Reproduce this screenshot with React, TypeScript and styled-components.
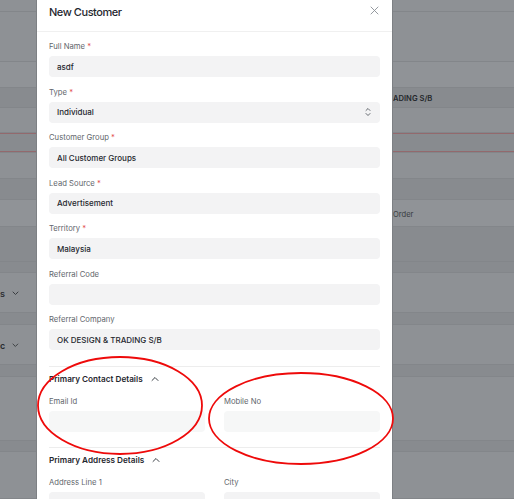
import styled, { createGlobalStyle } from "styled-components";

const SCRIM = "#8e9195";
const SCRIM_LIGHT = "#909397";
const SCRIM_DARK = "#888b8f";
const SCRIM_LINE = "#83868a";
const TEXT = "#1f272e";
const LABEL = "#62666c";
const CONTROL = "#f3f3f4";
const BORDER = "#ededed";

const GlobalStyle = createGlobalStyle`
  html, body {
    margin: 0;
    padding: 0;
    overflow: hidden;
    background: ${SCRIM};
  }
  * {
    box-sizing: border-box;
  }
`;

type Tone = "base" | "light" | "dark";

type Row = {
  height: number;
  tone?: Tone;
  left?: string;
  right?: string;
  rightBold?: boolean;
  accent?: boolean;
};

const rows: Row[] = [
  { height: 12 },
  { height: 50 },
  { height: 26, tone: "light" },
  { height: 20, tone: "dark", right: "ADING S/B", rightBold: true },
  { height: 25 },
  { height: 20, tone: "dark", accent: true },
  { height: 26 },
  { height: 21, tone: "dark" },
  { height: 27, tone: "light", right: "Order" },
  { height: 35, tone: "dark" },
  { height: 11, tone: "dark" },
  { height: 40, left: "s" },
  { height: 12, tone: "dark" },
  { height: 40, left: "c" },
  { height: 12, tone: "dark" },
  { height: 64 },
  { height: 11, tone: "dark" },
  { height: 47 },
];

const toneColor = (t: Tone = "base") =>
  t === "dark" ? SCRIM_DARK : t === "light" ? SCRIM_LIGHT : SCRIM;

const Stage = styled.div`
  position: relative;
  width: 514px;
  height: 499px;
  overflow: hidden;
  font-family: Inter, "Noto Sans", sans-serif;
`;

const Backdrop = styled.div`
  display: flex;
  flex-direction: column;
  width: 100%;
`;

const TopStrip = styled.div`
  display: flex;
  justify-content: flex-end;
  height: 0;
`;

const TopTab = styled.div`
  width: 62px;
  height: 3px;
  background: #97999d;
`;

const BackRow = styled.div<{ $h: number; $tone?: Tone; $accent?: boolean }>`
  display: flex;
  align-items: center;
  height: ${(p) => p.$h}px;
  padding-top: 2px;
  flex-shrink: 0;
  background: ${(p) => toneColor(p.$tone)};
  border-bottom: 1px solid ${SCRIM_LINE};
  box-shadow: ${(p) =>
    p.$accent ? "inset 0 1px 0 #93696d, inset 0 -1px 0 #93696d" : "none"};
`;

const LeftCell = styled.div`
  display: flex;
  align-items: center;
  justify-content: flex-end;
  gap: 7px;
  width: 19px;
  overflow: hidden;
  font-size: 9px;
  font-weight: 600;
  color: #2b2e32;
`;

const Spacer = styled.div`
  width: 374px;
  flex-shrink: 0;
`;

const RightText = styled.span<{ $bold?: boolean }>`
  font-size: 7.6px;
  font-weight: ${(p) => (p.$bold ? 600 : 400)};
  color: ${(p) => (p.$bold ? "#25282c" : "#3a3e43")};
  white-space: nowrap;
`;

const Modal = styled.div`
  position: absolute;
  top: 0;
  left: 36px;
  width: 357px;
  height: 499px;
  overflow: hidden;
  background: #fff;
  border-left: 1px solid #7d8084;
  border-right: 1px solid #7d8084;
  display: flex;
  flex-direction: column;
`;

const Header = styled.div`
  display: flex;
  flex-shrink: 0;
  justify-content: space-between;
  align-items: flex-start;
  height: 32px;
  padding: 4px 13px 0 12px;
  border-bottom: 1px solid #f0f0f0;
`;

const Title = styled.h3`
  margin: 0;
  font-size: 11px;
  line-height: 16px;
  font-weight: 500;
  letter-spacing: -0.45px;
  color: ${TEXT};
`;

const CloseButton = styled.button`
  display: flex;
  border: 0;
  padding: 0;
  margin-top: 2px;
  background: none;
  color: #8a8f95;
`;

const Body = styled.div`
  display: flex;
  flex-shrink: 0;
  flex-direction: column;
  padding: 10px 12px 0;
`;

const Fields = styled.div`
  display: flex;
  flex-direction: column;
  gap: 10.5px;
  padding-bottom: 16px;
`;

const Field = styled.div`
  display: flex;
  flex-direction: column;
  gap: 4px;
  min-width: 0;
`;

const Label = styled.label`
  font-size: 7.7px;
  line-height: 10px;
  color: ${LABEL};
`;

const Required = styled.span`
  color: #e24c4c;
`;

const Control = styled.div<{ $soft?: boolean }>`
  display: flex;
  align-items: center;
  justify-content: space-between;
  height: 21px;
  padding: 0 9px 0 8px;
  border-radius: 4px;
  background: ${(p) => (p.$soft ? "#f6f7f7" : CONTROL)};
  font-size: 8px;
  font-weight: 500;
  color: ${TEXT};
`;

const Section = styled.div`
  display: flex;
  flex-direction: column;
  gap: 12px;
  padding: 6px 0 15px;
  border-top: 1px solid ${BORDER};
`;

const SectionHead = styled.div`
  display: flex;
  align-items: center;
  gap: 8px;
  height: 12px;
  font-size: 8.2px;
  font-weight: 600;
  color: ${TEXT};
`;

const Columns = styled.div`
  display: grid;
  grid-template-columns: 1fr 1fr;
  column-gap: 19px;
`;

const Marks = styled.svg`
  position: absolute;
  inset: 0;
  pointer-events: none;
`;

const ChevronUp = () => (
  <svg width="8" height="6" viewBox="0 0 8 6" fill="none">
    <path d="M1 4.5 4 1.5 7 4.5" stroke="#3b4046" strokeWidth="1" strokeLinecap="round" strokeLinejoin="round" />
  </svg>
);

const ChevronDown = ({ color = "#3b3e42" }: { color?: string }) => (
  <svg width="7" height="5" viewBox="0 0 7 5" fill="none">
    <path d="M1 1 3.5 3.5 6 1" stroke={color} strokeWidth="1" strokeLinecap="round" strokeLinejoin="round" />
  </svg>
);

const SelectIcon = () => (
  <svg width="6" height="10" viewBox="0 0 6 10" fill="none">
    <path d="M1 3.5 3 1.5 5 3.5M1 6.5 3 8.5 5 6.5" stroke="#555a60" strokeWidth="0.9" strokeLinecap="round" strokeLinejoin="round" />
  </svg>
);

const CloseIcon = () => (
  <svg width="9" height="9" viewBox="0 0 9 9" fill="none">
    <path d="M1 1 8 8M8 1 1 8" stroke="currentColor" strokeWidth="0.9" strokeLinecap="round" />
  </svg>
);

type FormField = { label: string; value?: string; required?: boolean; select?: boolean };

const fields: FormField[] = [
  { label: "Full Name", value: "asdf", required: true },
  { label: "Type", value: "Individual", required: true, select: true },
  { label: "Customer Group", value: "All Customer Groups", required: true },
  { label: "Lead Source", value: "Advertisement", required: true },
  { label: "Territory", value: "Malaysia", required: true },
  { label: "Referral Code" },
  { label: "Referral Company", value: "OK DESIGN & TRADING S/B" },
];

const FieldBlock = ({ label, value, required, select, soft }: FormField & { soft?: boolean }) => (
  <Field>
    <Label>
      {label}
      {required && <Required> *</Required>}
    </Label>
    <Control $soft={soft}>
      <span>{value}</span>
      {select && <SelectIcon />}
    </Control>
  </Field>
);

export default function App() {
  return (
    <Stage>
      <GlobalStyle />
      <TopStrip>
        <TopTab />
      </TopStrip>
      <Backdrop>
        {rows.map((r, i) => (
          <BackRow key={i} $h={r.height} $tone={r.tone} $accent={r.accent}>
            <LeftCell>
              {r.left && (
                <>
                  <span>{r.left}</span>
                  <ChevronDown />
                </>
              )}
            </LeftCell>
            <Spacer />
            {r.right && <RightText $bold={r.rightBold}>{r.right}</RightText>}
          </BackRow>
        ))}
      </Backdrop>

      <Modal>
        <Header>
          <Title>New Customer</Title>
          <CloseButton aria-label="Close">
            <CloseIcon />
          </CloseButton>
        </Header>
        <Body>
          <Fields>
            {fields.map((f) => (
              <FieldBlock key={f.label} {...f} />
            ))}
          </Fields>
          <Section>
            <SectionHead>
              Primary Contact Details
              <ChevronUp />
            </SectionHead>
            <Columns>
              <FieldBlock label="Email Id" soft />
              <FieldBlock label="Mobile No" soft />
            </Columns>
          </Section>
          <Section>
            <SectionHead>
              Primary Address Details
              <ChevronUp />
            </SectionHead>
            <Columns>
              <FieldBlock label="Address Line 1" />
              <FieldBlock label="City" />
            </Columns>
          </Section>
        </Body>
      </Modal>

      <Marks width="514" height="499" viewBox="0 0 514 499">
        <ellipse cx="120" cy="405.5" rx="82" ry="48.5" fill="none" stroke="#ee0a0a" strokeWidth="1.8" />
        <ellipse cx="301" cy="418.5" rx="92" ry="45.5" fill="none" stroke="#ee0a0a" strokeWidth="1.8" />
      </Marks>
    </Stage>
  );
}
